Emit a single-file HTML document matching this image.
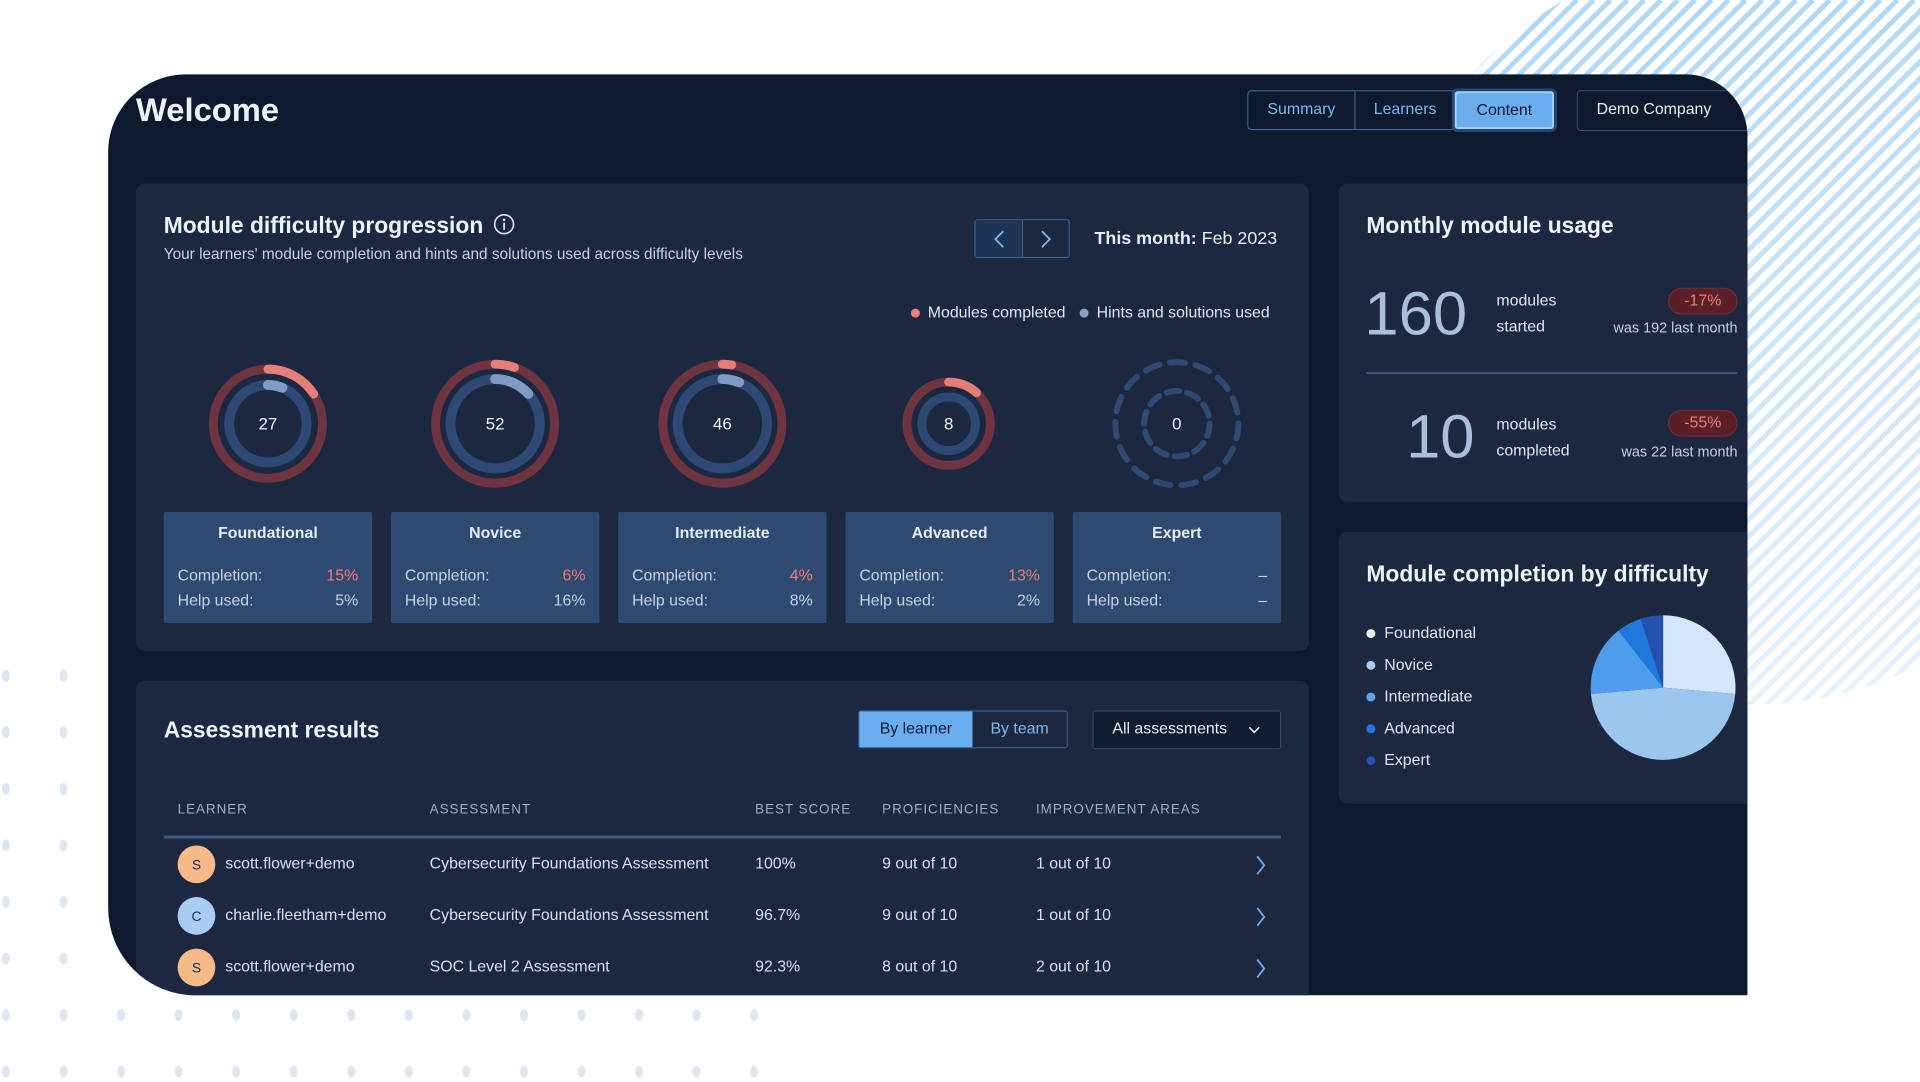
<!DOCTYPE html>
<html><head><meta charset="utf-8"><style>
*{margin:0;padding:0;box-sizing:border-box}
body{width:1920px;height:1080px;background:#fff;position:relative;overflow:hidden;font-family:"Liberation Sans",sans-serif;color:#e6ecf4}
#wrap{position:absolute;left:0;top:0;width:1935px;height:1090px;transform:scale(0.9923);transform-origin:0 0}
.abs{position:absolute}
#panel{left:109px;top:75px;width:1652px;height:928px;background:#0d1a2e;border-radius:78px 62px 0 88px;overflow:hidden}
.card{position:absolute;background:#1b2840;border-radius:9px}
.t{position:absolute;white-space:nowrap}
.stat{position:absolute;top:331px;width:210px;height:112px;background:#2f4a70;border-radius:2px}
.stat .h{position:absolute;top:13px;width:100%;text-align:center;font-size:16px;font-weight:bold;color:#e6ecf4}
.stat .r{position:absolute;left:14px;right:14px;font-size:16px;color:#c8d2e0;display:flex;justify-content:space-between}
.red{color:#ef7d78}
.th{position:absolute;top:122px;font-size:13.5px;letter-spacing:1px;color:#9fb0c8}
.row{position:absolute;left:0;font-size:16px;color:#d8e0ec}
.av{position:absolute;width:38px;height:38px;border-radius:50%;color:#1b2840;font-size:14px;text-align:center;line-height:38px}
</style></head><body>
<div id="wrap">
<svg class="abs" style="left:0;top:0" width="1935" height="1090">
<defs><clipPath id="cc"><circle cx="1765" cy="330" r="380"/></clipPath>
<linearGradient id="sg" x1="0" y1="0" x2="0.3" y2="1"><stop offset="0" stop-color="#a9d3f2"/><stop offset="1" stop-color="#e8f3fc"/></linearGradient></defs>
<g clip-path="url(#cc)" stroke="url(#sg)" stroke-width="5">
<path d="M1300 0 L500 800 M1317 0 L517 800 M1334 0 L534 800 M1351 0 L551 800 M1368 0 L568 800 M1385 0 L585 800 M1402 0 L602 800 M1419 0 L619 800 M1436 0 L636 800 M1453 0 L653 800 M1470 0 L670 800 M1487 0 L687 800 M1504 0 L704 800 M1521 0 L721 800 M1538 0 L738 800 M1555 0 L755 800 M1572 0 L772 800 M1589 0 L789 800 M1606 0 L806 800 M1623 0 L823 800 M1640 0 L840 800 M1657 0 L857 800 M1674 0 L874 800 M1691 0 L891 800 M1708 0 L908 800 M1725 0 L925 800 M1742 0 L942 800 M1759 0 L959 800 M1776 0 L976 800 M1793 0 L993 800 M1810 0 L1010 800 M1827 0 L1027 800 M1844 0 L1044 800 M1861 0 L1061 800 M1878 0 L1078 800 M1895 0 L1095 800 M1912 0 L1112 800 M1929 0 L1129 800 M1946 0 L1146 800 M1963 0 L1163 800 M1980 0 L1180 800 M1997 0 L1197 800 M2014 0 L1214 800 M2031 0 L1231 800 M2048 0 L1248 800 M2065 0 L1265 800 M2082 0 L1282 800 M2099 0 L1299 800 M2116 0 L1316 800 M2133 0 L1333 800 M2150 0 L1350 800 M2167 0 L1367 800 M2184 0 L1384 800 M2201 0 L1401 800 M2218 0 L1418 800 M2235 0 L1435 800 M2252 0 L1452 800 M2269 0 L1469 800 M2286 0 L1486 800 M2303 0 L1503 800 M2320 0 L1520 800 M2337 0 L1537 800 M2354 0 L1554 800 M2371 0 L1571 800 M2388 0 L1588 800 M2405 0 L1605 800 M2422 0 L1622 800 M2439 0 L1639 800 M2456 0 L1656 800 M2473 0 L1673 800 M2490 0 L1690 800 M2507 0 L1707 800 M2524 0 L1724 800 M2541 0 L1741 800 M2558 0 L1758 800 M2575 0 L1775 800 M2592 0 L1792 800 M2609 0 L1809 800 M2626 0 L1826 800 M2643 0 L1843 800 M2660 0 L1860 800"/>
</g>
<g fill="#dde6f2">
<ellipse cx="6" cy="681" rx="4" ry="6"/><ellipse cx="64" cy="681" rx="4" ry="6"/>
<ellipse cx="6" cy="738" rx="4" ry="6"/><ellipse cx="64" cy="738" rx="4" ry="6"/>
<ellipse cx="6" cy="795" rx="4" ry="6"/><ellipse cx="64" cy="795" rx="4" ry="6"/>
<ellipse cx="6" cy="852" rx="4" ry="6"/><ellipse cx="64" cy="852" rx="4" ry="6"/>
<ellipse cx="6" cy="909" rx="4" ry="6"/><ellipse cx="64" cy="909" rx="4" ry="6"/>
<ellipse cx="6" cy="966" rx="4" ry="6"/><ellipse cx="64" cy="966" rx="4" ry="6"/>
<ellipse cx="6" cy="1023" rx="4" ry="6"/><ellipse cx="64" cy="1023" rx="4" ry="6"/><ellipse cx="122" cy="1023" rx="4" ry="6"/><ellipse cx="180" cy="1023" rx="4" ry="6"/><ellipse cx="238" cy="1023" rx="4" ry="6"/><ellipse cx="296" cy="1023" rx="4" ry="6"/><ellipse cx="354" cy="1023" rx="4" ry="6"/><ellipse cx="412" cy="1023" rx="4" ry="6"/><ellipse cx="470" cy="1023" rx="4" ry="6"/><ellipse cx="528" cy="1023" rx="4" ry="6"/><ellipse cx="586" cy="1023" rx="4" ry="6"/><ellipse cx="644" cy="1023" rx="4" ry="6"/><ellipse cx="702" cy="1023" rx="4" ry="6"/><ellipse cx="760" cy="1023" rx="4" ry="6"/>
<ellipse cx="6" cy="1080" rx="4" ry="6"/><ellipse cx="64" cy="1080" rx="4" ry="6"/><ellipse cx="122" cy="1080" rx="4" ry="6"/><ellipse cx="180" cy="1080" rx="4" ry="6"/><ellipse cx="238" cy="1080" rx="4" ry="6"/><ellipse cx="296" cy="1080" rx="4" ry="6"/><ellipse cx="354" cy="1080" rx="4" ry="6"/><ellipse cx="412" cy="1080" rx="4" ry="6"/><ellipse cx="470" cy="1080" rx="4" ry="6"/><ellipse cx="528" cy="1080" rx="4" ry="6"/><ellipse cx="586" cy="1080" rx="4" ry="6"/><ellipse cx="644" cy="1080" rx="4" ry="6"/><ellipse cx="702" cy="1080" rx="4" ry="6"/><ellipse cx="760" cy="1080" rx="4" ry="6"/>
</g>
</svg>

<div id="panel" class="abs">
  <div class="t" style="left:28px;top:17px;font-size:33px;font-weight:bold;color:#eef2f8">Welcome</div>
  <div class="abs" style="left:1148px;top:16px;width:310px;height:40px;border:1.5px solid #3d6aa0;border-radius:4px;display:flex;font-size:16px;color:#7db7f2">
    <div style="width:108px;text-align:center;line-height:37px;border-right:1.5px solid #3d6aa0">Summary</div>
    <div style="width:100px;text-align:center;line-height:37px">Learners</div>
    <div style="flex:1;background:#6aaef0;color:#0d1a2e;text-align:center;line-height:35px;border:2px solid #9fd0ff;border-radius:3px;box-shadow:0 0 0 3px #27466e">Content</div>
  </div>
  <div class="abs" style="left:1480px;top:16px;width:190px;height:41px;border:1.5px solid #3a4c66;border-radius:4px;font-size:16px;line-height:38px;padding-left:19px;color:#e6ecf4">Demo Company</div>

  <div class="card" style="left:28px;top:110px;width:1182px;height:471px">
    <div class="t" style="left:28px;top:29px;font-size:23px;font-weight:bold;color:#eef2f8">Module difficulty progression
      <svg width="22" height="22" viewBox="0 0 22 22" style="vertical-align:-2px;margin-left:4px"><circle cx="11" cy="11" r="9.5" fill="none" stroke="#dfe6f0" stroke-width="1.6"/><circle cx="11" cy="6.5" r="1.3" fill="#dfe6f0"/><path d="M11 9.5v7" stroke="#dfe6f0" stroke-width="1.8"/></svg></div>
    <div class="t" style="left:28px;top:63px;font-size:15.5px;color:#c8d2e0">Your learners' module completion and hints and solutions used across difficulty levels</div>
    <div class="abs" style="left:845px;top:36px;width:96px;height:39px;border:1.5px solid #3d6aa0;border-radius:3px;display:flex">
      <div style="width:48px;height:100%;background:#1f3556;border-right:1.5px solid #3d6aa0;display:flex;align-items:center;justify-content:center"><svg width="12" height="20"><path d="M10 2L2 10l8 8" fill="none" stroke="#7db7f2" stroke-width="1.8"/></svg></div>
      <div style="flex:1;display:flex;align-items:center;justify-content:center"><svg width="12" height="20"><path d="M2 2l8 8-8 8" fill="none" stroke="#7db7f2" stroke-width="1.8"/></svg></div>
    </div>
    <div class="t" style="left:966px;top:45px;font-size:18px;color:#e6ecf4"><b>This month:</b> Feb 2023</div>
    <div class="t" style="left:781px;top:122px;font-size:16px;color:#dfe6f0"><span style="display:inline-block;width:9px;height:9px;border-radius:50%;background:#ef7d78;margin-right:8px"></span>Modules completed <span style="display:inline-block;width:9px;height:9px;border-radius:50%;background:#8aa2c2;margin:0 8px 0 10px"></span>Hints and solutions used</div>

    <svg class="abs" style="left:0;top:0" width="1182" height="330">
      <g font-family="Liberation Sans" font-size="17" fill="#eef2f8" text-anchor="middle">
        <g transform="translate(133,242)">
          <circle r="55" fill="none" stroke="#6e3440" stroke-width="9"/>
          <circle r="55" fill="none" stroke="#e57d78" stroke-width="9" pathLength="360" stroke-dasharray="62 400" stroke-dashoffset="5" transform="rotate(-90)" stroke-linecap="round"/>
          <circle r="39" fill="none" stroke="#2e4a74" stroke-width="10"/>
          <circle r="39" fill="none" stroke="#7f9bc2" stroke-width="10" pathLength="360" stroke-dasharray="30 400" stroke-dashoffset="8" transform="rotate(-90)" stroke-linecap="round"/>
          <text y="6">27</text>
        </g>
        <g transform="translate(362,242)">
          <circle r="60" fill="none" stroke="#6e3440" stroke-width="9"/>
          <circle r="60" fill="none" stroke="#e57d78" stroke-width="9" pathLength="360" stroke-dasharray="24 400" stroke-dashoffset="5" transform="rotate(-90)" stroke-linecap="round"/>
          <circle r="45" fill="none" stroke="#2e4a74" stroke-width="10"/>
          <circle r="45" fill="none" stroke="#7f9bc2" stroke-width="10" pathLength="360" stroke-dasharray="55 400" stroke-dashoffset="7" transform="rotate(-90)" stroke-linecap="round"/>
          <text y="6">52</text>
        </g>
        <g transform="translate(591,242)">
          <circle r="60" fill="none" stroke="#6e3440" stroke-width="9"/>
          <circle r="60" fill="none" stroke="#e57d78" stroke-width="9" pathLength="360" stroke-dasharray="14 400" stroke-dashoffset="5" transform="rotate(-90)" stroke-linecap="round"/>
          <circle r="45" fill="none" stroke="#2e4a74" stroke-width="10"/>
          <circle r="45" fill="none" stroke="#7f9bc2" stroke-width="10" pathLength="360" stroke-dasharray="28 400" stroke-dashoffset="6" transform="rotate(-90)" stroke-linecap="round"/>
          <text y="6">46</text>
        </g>
        <g transform="translate(819,242)">
          <circle r="42" fill="none" stroke="#6e3440" stroke-width="9"/>
          <circle r="42" fill="none" stroke="#e57d78" stroke-width="9" pathLength="360" stroke-dasharray="48 400" stroke-dashoffset="6" transform="rotate(-90)" stroke-linecap="round"/>
          <circle r="27" fill="none" stroke="#2e4a74" stroke-width="9"/>
          <circle r="27" fill="none" stroke="#7f9bc2" stroke-width="9" pathLength="360" stroke-dasharray="2 400" stroke-dashoffset="2" transform="rotate(-90)" stroke-linecap="round"/>
          <text y="6">8</text>
        </g>
        <g transform="translate(1049,242)">
          <circle r="62" fill="none" stroke="#2e4a74" stroke-width="6" pathLength="360" stroke-dasharray="14 10" stroke-linecap="round"/>
          <circle r="33" fill="none" stroke="#2e4a74" stroke-width="6" pathLength="360" stroke-dasharray="22 14" stroke-linecap="round"/>
          <text y="6">0</text>
        </g>
      </g>
    </svg>

    <div class="stat" style="left:28px"><div class="h">Foundational</div><div class="r" style="top:56px"><span>Completion:</span><span class="red">15%</span></div><div class="r" style="top:81px"><span>Help used:</span><span>5%</span></div></div>
    <div class="stat" style="left:257px"><div class="h">Novice</div><div class="r" style="top:56px"><span>Completion:</span><span class="red">6%</span></div><div class="r" style="top:81px"><span>Help used:</span><span>16%</span></div></div>
    <div class="stat" style="left:486px"><div class="h">Intermediate</div><div class="r" style="top:56px"><span>Completion:</span><span class="red">4%</span></div><div class="r" style="top:81px"><span>Help used:</span><span>8%</span></div></div>
    <div class="stat" style="left:715px"><div class="h">Advanced</div><div class="r" style="top:56px"><span>Completion:</span><span class="red">13%</span></div><div class="r" style="top:81px"><span>Help used:</span><span>2%</span></div></div>
    <div class="stat" style="left:944px"><div class="h">Expert</div><div class="r" style="top:56px"><span>Completion:</span><span>–</span></div><div class="r" style="top:81px"><span>Help used:</span><span>–</span></div></div>
  </div>

  <div class="card" style="left:28px;top:611px;width:1182px;height:340px">
    <div class="t" style="left:28px;top:36px;font-size:23px;font-weight:bold;color:#eef2f8">Assessment results</div>
    <div class="abs" style="left:728px;top:30px;width:211px;height:38px;border:1.5px solid #3d6aa0;border-radius:3px;display:flex;font-size:16px">
      <div style="width:114px;background:#6aaef0;color:#0d1a2e;text-align:center;line-height:35px">By learner</div>
      <div style="flex:1;text-align:center;line-height:35px;color:#7db7f2">By team</div>
    </div>
    <div class="abs" style="left:964px;top:30px;width:190px;height:39px;border:1.5px solid #3a4c66;background:#0f1c30;border-radius:3px;font-size:16px;line-height:36px;padding-left:19px;color:#e6ecf4">All assessments<svg width="14" height="10" style="position:absolute;right:19px;top:14px"><path d="M2 2l5 5 5-5" fill="none" stroke="#dfe6f0" stroke-width="1.6"/></svg></div>
    <div class="th" style="left:42px">LEARNER</div>
    <div class="th" style="left:296px">ASSESSMENT</div>
    <div class="th" style="left:624px">BEST SCORE</div>
    <div class="th" style="left:752px">PROFICIENCIES</div>
    <div class="th" style="left:907px">IMPROVEMENT AREAS</div>
    <div class="abs" style="left:28px;top:156px;width:1126px;height:3px;background:#3c5a84"></div>

    <div class="av" style="left:42px;top:166px;background:#f6bb88">S</div>
    <div class="av" style="left:42px;top:218px;background:#a9cdf2">C</div>
    <div class="av" style="left:42px;top:270px;background:#f6bb88">S</div>
    <div class="row" style="top:176px"><span class="t" style="left:90px">scott.flower+demo</span><span class="t" style="left:296px">Cybersecurity Foundations Assessment</span><span class="t" style="left:624px">100%</span><span class="t" style="left:752px">9 out of 10</span><span class="t" style="left:907px">1 out of 10</span></div>
    <div class="row" style="top:228px"><span class="t" style="left:90px">charlie.fleetham+demo</span><span class="t" style="left:296px">Cybersecurity Foundations Assessment</span><span class="t" style="left:624px">96.7%</span><span class="t" style="left:752px">9 out of 10</span><span class="t" style="left:907px">1 out of 10</span></div>
    <div class="row" style="top:280px"><span class="t" style="left:90px">scott.flower+demo</span><span class="t" style="left:296px">SOC Level 2 Assessment</span><span class="t" style="left:624px">92.3%</span><span class="t" style="left:752px">8 out of 10</span><span class="t" style="left:907px">2 out of 10</span></div>
    <svg class="abs" style="left:1128px;top:175px" width="12" height="130"><g fill="none" stroke="#6aaef0" stroke-width="1.8"><path d="M2 2l7 9-7 9"/><path d="M2 54l7 9-7 9"/><path d="M2 106l7 9-7 9"/></g></svg>
  </div>

  <div class="card" style="left:1240px;top:110px;width:430px;height:321px">
    <div class="t" style="left:28px;top:29px;font-size:23px;font-weight:bold;color:#eef2f8">Monthly module usage</div>
    <div class="t" style="left:26px;top:96px;font-size:62px;color:#a9bfdc">160</div>
    <div class="t" style="left:159px;top:106px;font-size:16px;line-height:26px;color:#dfe6f0">modules<br>started</div>
    <div class="abs" style="left:332px;top:105px;width:70px;height:27px;border-radius:14px;background:#5a1f27;border:1px solid #7a2c34;color:#ef7d78;font-size:16px;text-align:center;line-height:25px">-17%</div>
    <div class="t" style="right:28px;top:138px;font-size:14.5px;color:#c8d2e0">was 192 last month</div>
    <div class="abs" style="left:28px;top:190px;width:374px;height:2px;background:#3c5a84"></div>
    <div class="t" style="left:68px;top:220px;font-size:62px;color:#a9bfdc">10</div>
    <div class="t" style="left:159px;top:231px;font-size:16px;line-height:26px;color:#dfe6f0">modules<br>completed</div>
    <div class="abs" style="left:332px;top:228px;width:70px;height:27px;border-radius:14px;background:#5a1f27;border:1px solid #7a2c34;color:#ef7d78;font-size:16px;text-align:center;line-height:25px">-55%</div>
    <div class="t" style="right:28px;top:263px;font-size:14.5px;color:#c8d2e0">was 22 last month</div>
  </div>

  <div class="card" style="left:1240px;top:461px;width:430px;height:274px">
    <div class="t" style="left:28px;top:29px;font-size:23px;font-weight:bold;color:#eef2f8">Module completion by difficulty</div>
    <div class="abs" style="left:28px;top:87px;font-size:16px;line-height:32px;color:#dfe6f0">
      <div><span style="display:inline-block;width:9px;height:9px;border-radius:50%;background:#e6eef8;margin-right:9px"></span>Foundational</div>
      <div><span style="display:inline-block;width:9px;height:9px;border-radius:50%;background:#a9cdf2;margin-right:9px"></span>Novice</div>
      <div><span style="display:inline-block;width:9px;height:9px;border-radius:50%;background:#5aa5ee;margin-right:9px"></span>Intermediate</div>
      <div><span style="display:inline-block;width:9px;height:9px;border-radius:50%;background:#1f78dc;margin-right:9px"></span>Advanced</div>
      <div><span style="display:inline-block;width:9px;height:9px;border-radius:50%;background:#2450b0;margin-right:9px"></span>Expert</div>
    </div>
    <svg class="abs" style="left:252px;top:82px" width="150" height="150" viewBox="-75 -75 150 150">
      <path d="M0 0 L0 -73 A73 73 0 0 1 72.7 6.4 Z" fill="#d3e6fa"/>
      <path d="M0 0 L72.7 6.4 A73 73 0 0 1 -72.7 6.4 Z" fill="#9dc6ef"/>
      <path d="M0 0 L-72.7 6.4 A73 73 0 0 1 -45 -57.5 Z" fill="#4e9ded"/>
      <path d="M0 0 L-45 -57.5 A73 73 0 0 1 -22.5 -69.4 Z" fill="#1f78dc"/>
      <path d="M0 0 L-22.5 -69.4 A73 73 0 0 1 0 -73 Z" fill="#2450b0"/>
    </svg>
  </div>
</div>
</div>
</body></html>
